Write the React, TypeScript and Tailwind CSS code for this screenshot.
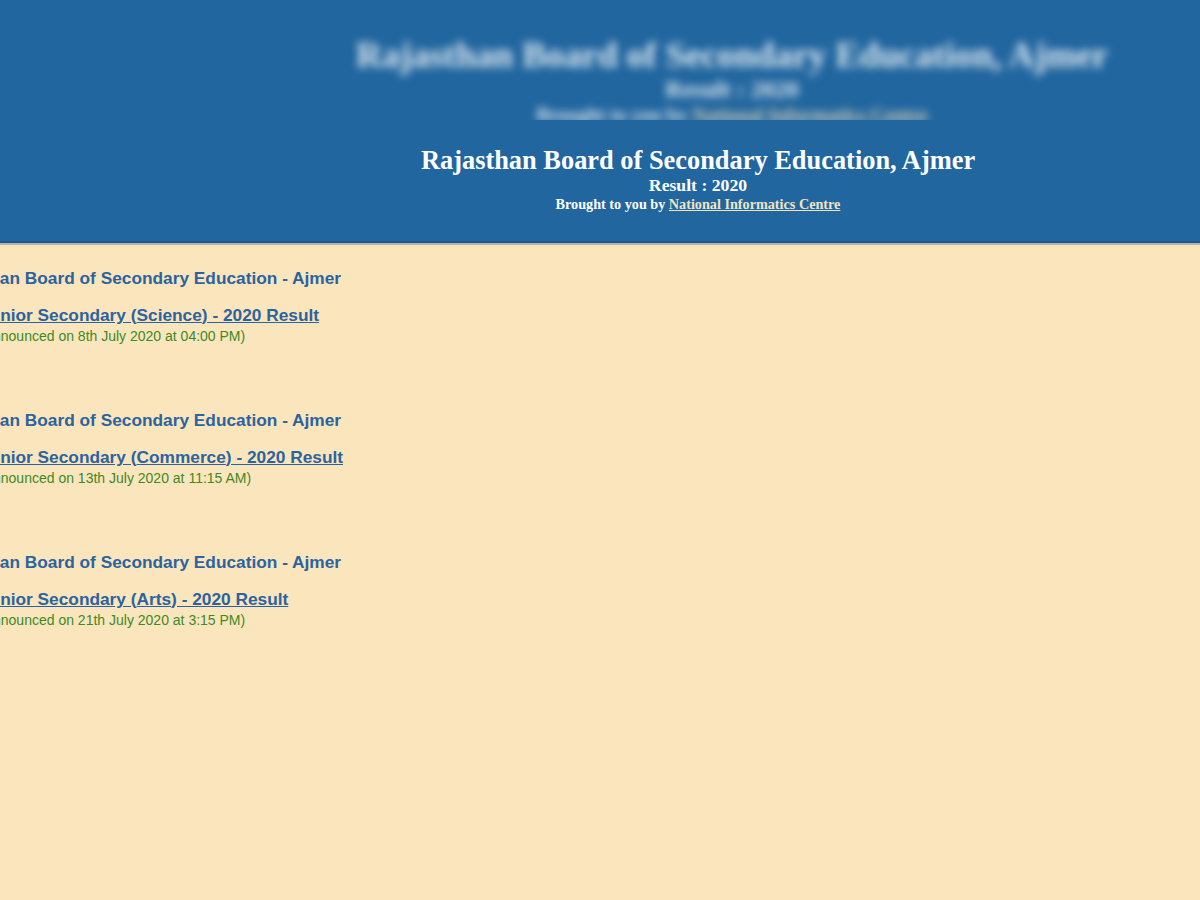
import React from "react";

const serif = { fontFamily: '"Liberation Serif", "Times New Roman", serif' };

function HeaderText({ big }: { big?: boolean }) {
  if (big) {
    return (
      <div className="flex flex-col items-center text-white font-bold" style={serif}>
        <div className="text-[35.8px] leading-[40px] whitespace-nowrap">Rajasthan Board of Secondary Education, Ajmer</div>
        <div className="text-[24px] leading-[28px] whitespace-nowrap">Result : 2020</div>
        <div className="text-[19.5px] leading-[24px] whitespace-nowrap">
          Brought to you by <span className="underline text-[#efe0bd]">National Informatics Centre</span>
        </div>
      </div>
    );
  }
  return (
    <div className="flex flex-col items-center text-white font-bold" style={serif}>
      <div className="text-[26.4px] leading-[30px] whitespace-nowrap">Rajasthan Board of Secondary Education, Ajmer</div>
      <div className="text-[17.7px] leading-[20px] whitespace-nowrap">Result : 2020</div>
      <div className="text-[14.2px] leading-[18px] whitespace-nowrap">
        Brought to you by <a href="#" className="underline text-[#f3e3bd]">National Informatics Centre</a>
      </div>
    </div>
  );
}

const items = [
  { stream: "Science", date: "8th July 2020 at 04:00 PM" },
  { stream: "Commerce", date: "13th July 2020 at 11:15 AM" },
  { stream: "Arts", date: "21th July 2020 at 3:15 PM" },
];

export default function App() {
  return (
    <div
      className="min-h-[900px] w-[1200px] bg-[#fbe5bd] overflow-hidden"
      style={{ fontFamily: '"Liberation Sans", Arial, sans-serif' }}
    >
      <header className="relative h-[245px] bg-[#21669f] border-b-[2px] border-[#b4b6ab] overflow-hidden">
        <div className="absolute inset-x-0 top-0 h-[120px] overflow-hidden">
          <div className="pt-[35px] pl-[264px] flex justify-center blur-[4px] opacity-85">
            <HeaderText big />
          </div>
        </div>
        <div className="absolute inset-x-0 top-[241px] h-[2px] bg-[#1d5a8c]" />
        <div className="pt-[145px] pl-[196px] flex justify-center">
          <HeaderText />
        </div>
      </header>
      <main className="ml-[-62.6px] pt-[23px] flex flex-col gap-[66px]">
        {items.map((it) => (
          <section key={it.stream} className="flex flex-col">
            <div className="text-[17.3px] leading-[20px] font-bold text-[#2a64a0] whitespace-nowrap">
              Rajasthan Board of Secondary Education - Ajmer
            </div>
            <div className="ml-[41.6px] flex flex-col items-start">
              <a
                href="#"
                className="mt-[17px] text-[17.3px] leading-[20px] font-bold text-[#2a64a0] underline whitespace-nowrap"
              >
                Senior Secondary ({it.stream}) - 2020 Result
              </a>
              <div className="mt-[3px] text-[14px] leading-[16px] text-[#3d8a1f] whitespace-nowrap">
                (Announced on {it.date})
              </div>
            </div>
          </section>
        ))}
      </main>
    </div>
  );
}
